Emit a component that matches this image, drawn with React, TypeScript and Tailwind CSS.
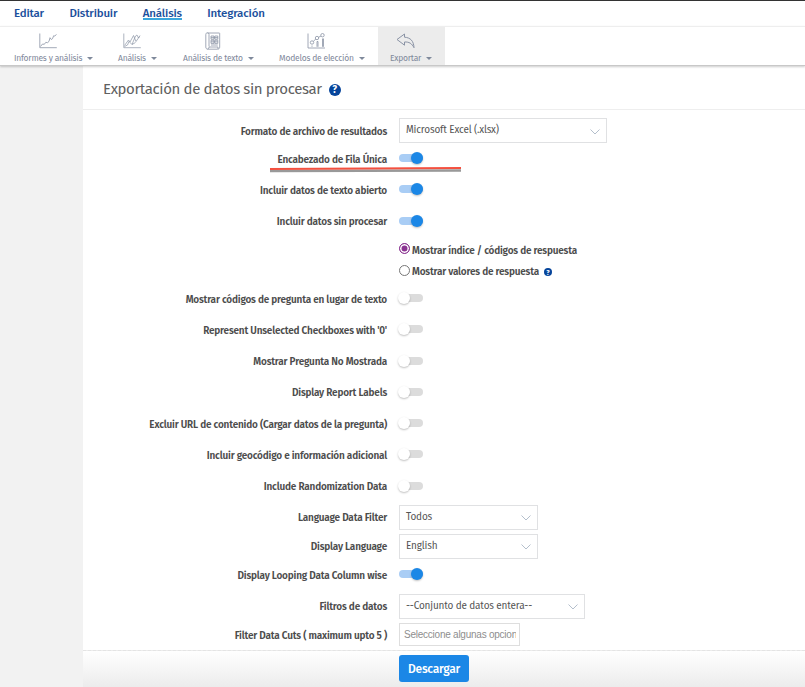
import { useState, type ReactNode } from "react";
import clsx from "clsx";

const tabs = ["Editar", "Distribuir", "Análisis", "Integración"];

function HelpIcon({ className }: { className: string }) {
  return (
    <span className={clsx("flex items-center justify-center rounded-full bg-[#06459b] font-bold text-white", className)}>
      ?
    </span>
  );
}

function ReportIcon() {
  return (
    <svg width="18" height="16" viewBox="0 0 18 16" fill="none" stroke="#8a93a5" strokeWidth="0.8">
      <path d="M.8.5v14.2h17" />
      <path d="M1.500 13.500l2-2.500 1.800.3 1.500-2 1.700.4 1.500-1.300 1-3.700 1.300 1.800 1.200-.8 1.200-3 1 .3 1.800-1.500" />
    </svg>
  );
}

function AnalysisIcon() {
  return (
    <svg width="18" height="16" viewBox="0 0 18 16" fill="none" stroke="#8a93a5" strokeWidth="0.7">
      <path d="M.8.5v14.2h17" />
      <path d="M1.500 12.500l4-5.500 1.500 2 3.500-6.500 2.500 6 3.500-5" />
      <path d="M1.500 13.500l3-1.500 1.500-3.500 3 3 3.500-8.500 1.500-1 1.500 3 1.500-2.500M9 11.500l3.500-2" />
    </svg>
  );
}

function TextIcon() {
  return (
    <svg width="16" height="18" viewBox="0 0 16 18" fill="none" stroke="#8a93a5" strokeWidth="0.8">
      <path d="M4 14.500V2.500C4 .2.800.2.800 2.500V15c0 2.800 3.200 2.800 3.200 0h9v1.500c0 .4-.4.700-.8.700H2.500" />
      <path d="M2.500 1h11.700c.3 0 .5.200.5.500V15c0 1.200-.7 2.200-2 2.200" />
      <path d="M6 4h3v3.200h-3zM9.800 4h3v3.200h-3zM6 8.200h3v3.200h-3zM9.800 8.200h3v3.200h-3zM6 5.600h6.800M6 9.800h6.800M6 13h6.800" />
    </svg>
  );
}

function ChoiceIcon() {
  return (
    <svg width="18" height="16" viewBox="0 0 18 16" fill="none" stroke="#8a93a5" strokeWidth="0.8">
      <path d="M1 .5v14.500h17" />
      <circle cx="5" cy="9.500" r="1.700" />
      <circle cx="10" cy="5" r="1.700" />
      <circle cx="15.500" cy="2.200" r="1.700" />
      <path d="M6.300 8.300l2.500-2.200M11.500 4.300l2.500-1.300" />
      <path d="M5 13.800v-1.300M10 13.800V8.500h1v5.300M15.500 13.800V5.800h1v8" />
    </svg>
  );
}

function ExportIcon() {
  return (
    <svg width="19" height="16" viewBox="0 0 19 16" fill="none" stroke="#8a93a5" strokeWidth="1" strokeLinejoin="round">
      <path d="M8.500 1L1 6.500l7.500 5.700V9c4.500-.3 7.500 1.500 9.500 5.700C17.700 8 14.500 4.600 8.500 4.200z" />
    </svg>
  );
}

const tools = [
  { label: "Informes y análisis", icon: <ReportIcon />, width: "w-[105px] pl-[14px]" },
  { label: "Análisis", icon: <AnalysisIcon />, width: "w-[64px] pl-[13px]" },
  { label: "Análisis de texto", icon: <TextIcon />, width: "w-[97px] pl-[14px]" },
  { label: "Modelos de elección", icon: <ChoiceIcon />, width: "w-[112px] pl-[13px]" },
  { label: "Exportar", icon: <ExportIcon />, width: "w-[67px] pl-[12px] bg-[#ececec]" },
];

function Switch({ on = false }: { on?: boolean }) {
  const [checked, setChecked] = useState(on);
  return (
    <button
      type="button"
      role="switch"
      aria-checked={checked}
      onClick={() => setChecked(!checked)}
      className={clsx(
        "mb-[1px] flex h-2 w-6 items-center rounded-full",
        checked ? "justify-end bg-[#a9cdf5]" : "bg-[#dcdcdc]"
      )}
    >
      <span
        className={clsx(
          "size-3 shrink-0 rounded-full shadow-[0_1px_2px_rgba(0,0,0,0.25)]",
          checked ? "bg-[#1b87e6]" : "-ml-[1px] bg-white"
        )}
      />
    </button>
  );
}

function Select({ value, className }: { value: string; className: string }) {
  return (
    <div
      className={clsx(
        "flex h-[25px] items-center justify-between border border-[#e0e1e3] bg-white px-[6px] text-[10px] tracking-[-0.17px] text-[#545454]",
        className
      )}
    >
      <span>{value}</span>
      <svg width="10" height="6" viewBox="0 0 10 6" fill="none" stroke="#b4bfcc" strokeWidth="1" className="mt-[2px]">
        <path d="M.5.5L5 5l4.500-4.500" />
      </svg>
    </div>
  );
}

function Row({ label, className, children }: { label: string; className: string; children: ReactNode }) {
  return (
    <div className={clsx("flex shrink-0 items-center", className)}>
      <span className="mr-[12px] w-[304px] shrink-0 pt-[3px] text-right text-[10px] font-semibold tracking-[-0.19px] whitespace-nowrap">
        {label}
      </span>
      {children}
    </div>
  );
}

const options = [
  "Mostrar códigos de pregunta en lugar de texto",
  "Represent Unselected Checkboxes with '0'",
  "Mostrar Pregunta No Mostrada",
  "Display Report Labels",
  "Excluir URL de contenido (Cargar datos de la pregunta)",
  "Incluir geocódigo e información adicional",
  "Include Randomization Data",
];

export default function App() {
  const [mode, setMode] = useState("index");

  return (
    <div className="flex h-[687px] w-[805px] flex-col overflow-hidden bg-[#f2f2f2] font-['Fira_Sans','Open_Sans',sans-serif] text-[#4c4c4c]">
      <nav className="flex h-[26px] shrink-0 items-start gap-[25.500px] border-t border-[#333] bg-white pt-[5px] pl-[14px] text-[11.500px] leading-[14px] font-medium tracking-[-0.170px] text-[#1b4f9c]">
        {tabs.map((t) => (
          <a key={t} href="#" className={clsx("h-[14px]", t === "Análisis" && "border-b-2 border-[#3ba6dc]")}>
            {t}
          </a>
        ))}
      </nav>

      <div className="z-10 flex h-[40px] shrink-0 border-t border-b border-[#eee] border-b-[#c8c8c8] bg-white text-[#7f899b] shadow-[0_1px_2px_rgba(0,0,0,0.2)]">
        {tools.map((t) => (
          <button key={t.label} type="button" className={clsx("flex h-[38px] shrink-0 items-start", t.width)}>
            <span className="flex flex-col items-center">
              <span className="flex h-[25px] items-center pt-[2px]">{t.icon}</span>
              <span className="text-[8.500px] leading-[12px] tracking-[-0.22px] whitespace-nowrap">{t.label}</span>
            </span>
            <span className="mt-[30px] ml-[5px] border-x-[3px] border-t-[3px] border-x-transparent border-t-[#7f899b]" />
          </button>
        ))}
      </div>

      <main className="ml-[83px] flex h-[621px] flex-col bg-white">
        <header className="flex h-[44px] shrink-0 items-center gap-[7px] border-b border-[#eee] pt-[4px] pl-[20px]">
          <h1 className="text-[15px] font-normal tracking-[-0.380px] text-[#606060]">Exportación de datos sin procesar</h1>
          <HelpIcon className="size-3 pt-[1px] text-[10px]" />
        </header>

        <form className="flex h-[540px] shrink-0 flex-col pt-[6px]">
          <Row label="Formato de archivo de resultados" className="h-[29px]">
            <Select value="Microsoft Excel (.xlsx)" className="w-[208px]" />
          </Row>
          <div className="relative">
            <Row label="Encabezado de Fila Única" className="h-[27px]">
              <Switch on />
            </Row>
            <svg width="194" height="7" viewBox="0 0 194 7" className="absolute top-[21px] left-[186px]">
              <path d="M1 5L192 4.500" stroke="#999" strokeWidth="2.400" />
              <path d="M1 2.900L192 1.900" stroke="#f4503f" strokeWidth="2" />
            </svg>
          </div>
          <Row label="Incluir datos de texto abierto" className="h-[35px]">
            <Switch on />
          </Row>
          <Row label="Incluir datos sin procesar" className="h-[28px]">
            <Switch on />
          </Row>

          <div className="flex h-[48px] shrink-0 flex-col pt-[5px] pl-[316px] text-[10px] font-semibold tracking-[-0.19px]">
            <label className="flex h-[22px] items-center gap-[2px]">
              <input
                type="radio"
                checked={mode === "index"}
                onChange={() => setMode("index")}
                className="mb-[4px] size-[11px] appearance-none rounded-full border border-[#767676] checked:border-[#8b3492] checked:bg-[#8b3492] checked:shadow-[inset_0_0_0_1.500px_white]"
              />
              <span className="pt-[1px]">Mostrar índice / códigos de respuesta</span>
            </label>
            <label className="flex h-[22px] items-center gap-[2px]">
              <input
                type="radio"
                checked={mode === "values"}
                onChange={() => setMode("values")}
                className="mb-[4px] size-[11px] appearance-none rounded-full border border-[#767676] checked:border-[#8b3492] checked:bg-[#8b3492] checked:shadow-[inset_0_0_0_1.500px_white]"
              />
              <span className="pt-[1px]">Mostrar valores de respuesta</span>
              <HelpIcon className="ml-[3px] size-2 pt-[1px] text-[7px]" />
            </label>
          </div>

          {options.map((o) => (
            <Row key={o} label={o} className="h-[31.250px]">
              <Switch />
            </Row>
          ))}

          <Row label="Language Data Filter" className="mt-[1px] h-[29px]">
            <Select value="Todos" className="w-[139px]" />
          </Row>
          <Row label="Display Language" className="h-[29px]">
            <Select value="English" className="w-[139px]" />
          </Row>
          <Row label="Display Looping Data Column wise" className="h-[28px]">
            <Switch on />
          </Row>
          <Row label="Filtros de datos" className="mt-[3px] h-[29px]">
            <Select value="--Conjunto de datos entera--" className="w-[186px]" />
          </Row>
          <Row label="Filter Data Cuts ( maximum upto 5 )" className="h-[28px]">
            <input
              readOnly
              value="Seleccione algunas opciones"
              className="h-[23px] w-[121px] border border-[#dedede] pr-[3px] pl-[4px] font-['Liberation_Sans',sans-serif] text-[10px] tracking-[-0.240px] text-[#8e8e8e] outline-none"
            />
          </Row>
        </form>

        <footer className="h-[37px] shrink-0 border-t border-dashed border-[#e4e4e4] bg-linear-to-b from-white to-[#ececec] pt-[4px] pl-[316px]">
          <button type="button" className="h-[27px] w-[70px] rounded-[3px] bg-[#1b87e6] text-[12px] font-medium tracking-[-0.280px] text-white">
            Descargar
          </button>
        </footer>
      </main>
    </div>
  );
}
